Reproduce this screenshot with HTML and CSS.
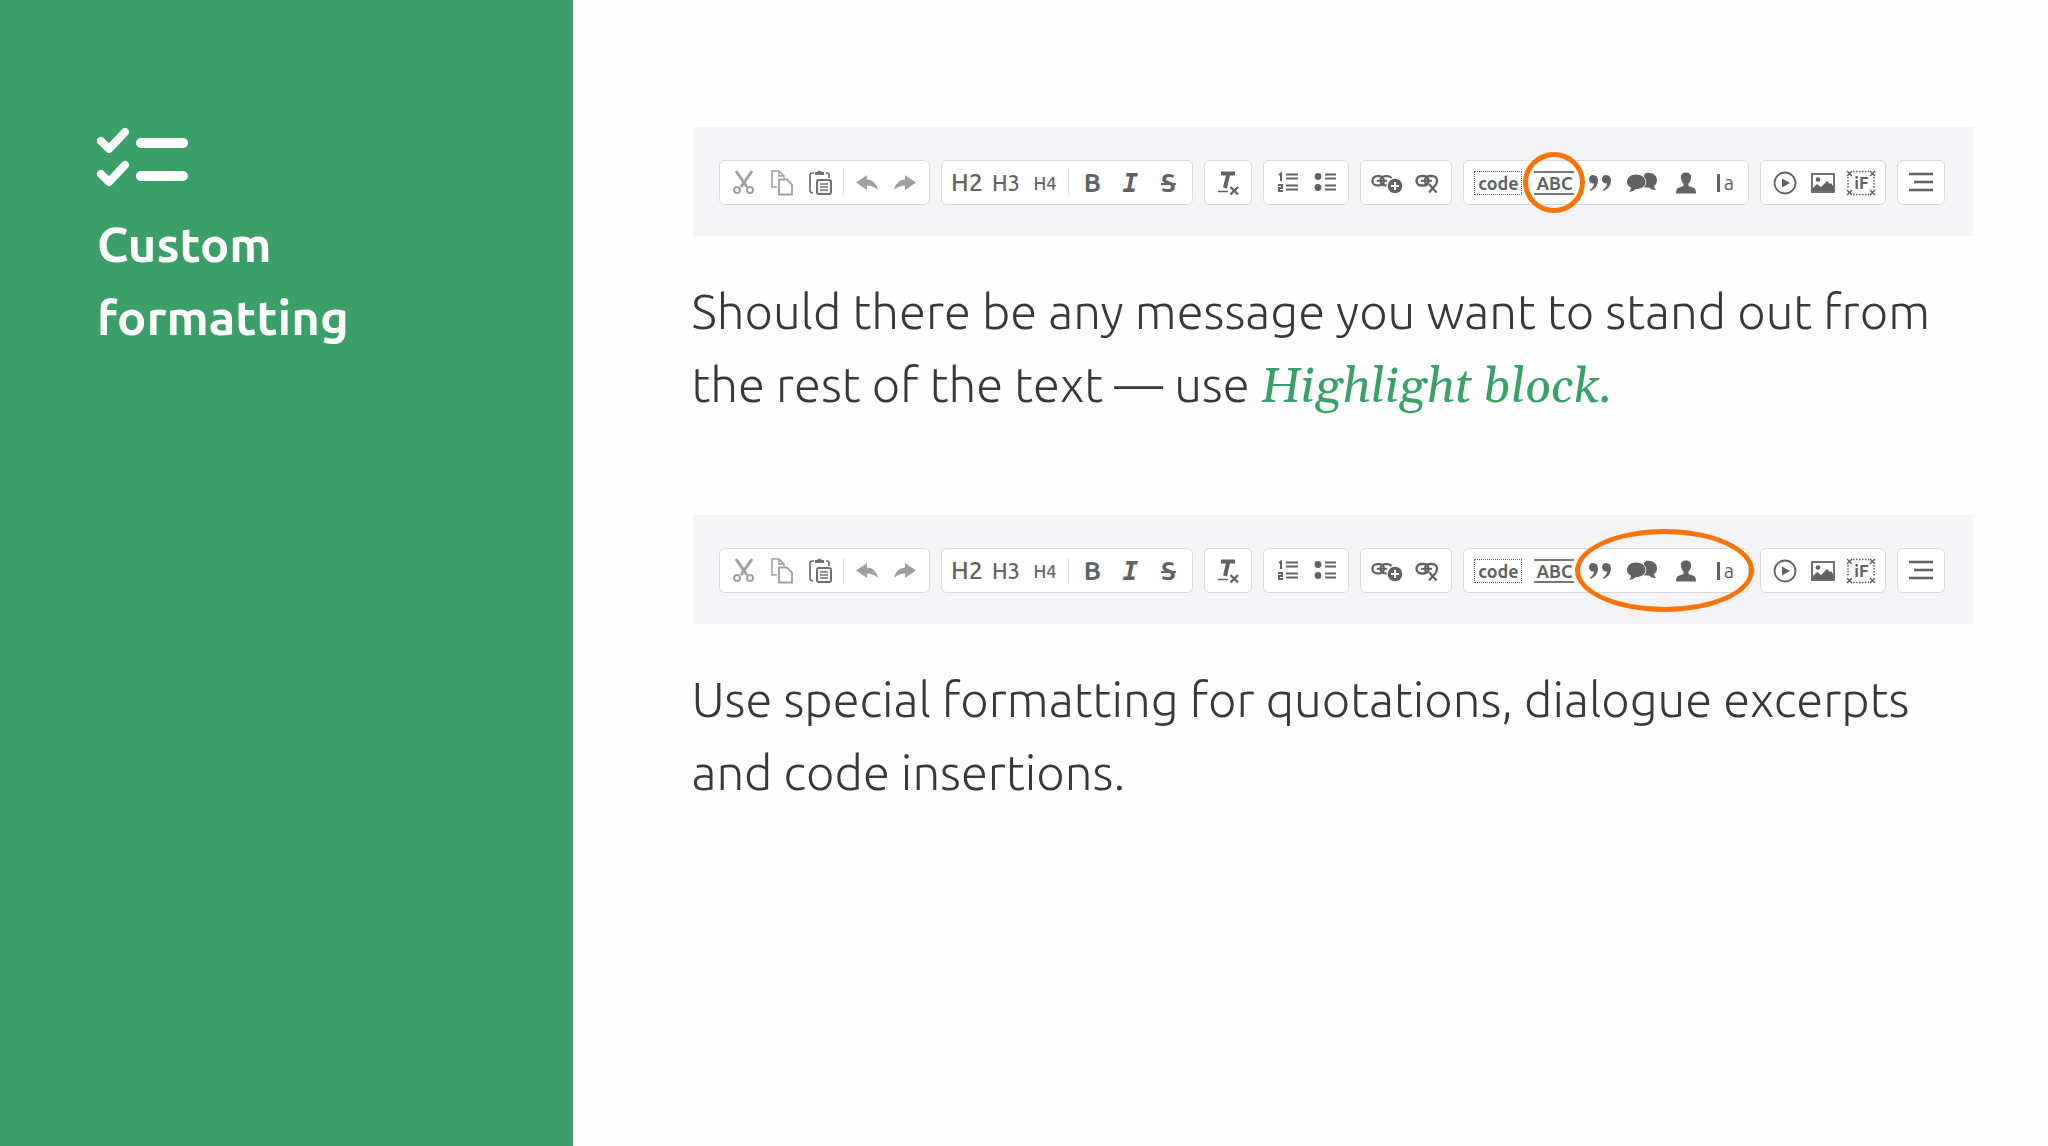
FILE: index.html
```html
<!DOCTYPE html>
<html lang="en">
<head>
    <meta charset="UTF-8">
    <meta name="viewport" content="width=device-width, initial-scale=1.0">
    <title>Custom formatting</title>
    <link rel="stylesheet" href="styles.css">
</head>
<body>
    <!-- Icons shared by both toolbars -->
    <svg class="sprite" aria-hidden="true">
        <symbol id="i-cut" viewBox="0 0 24 26">
            <path d="M4 1L15 17M20 1L9 17" fill="none" stroke="currentColor" stroke-width="3"/>
            <circle cx="5" cy="20" r="3" fill="none" stroke="currentColor" stroke-width="2"/>
            <circle cx="18" cy="20" r="3" fill="none" stroke="currentColor" stroke-width="2"/>
        </symbol>
        <symbol id="i-copy" viewBox="0 0 24 26">
            <path d="M7 17H2V1H9L14 6V8M9 1V6H14" fill="none" stroke="currentColor" stroke-width="1.5"/>
            <path d="M9 9.500H17L22 14.500V24.500H9Z" fill="none" stroke="currentColor" stroke-width="1.800"/>
        </symbol>
        <symbol id="i-paste" viewBox="0 0 24 26">
            <path d="M6 3H4Q2 3 2 5V20Q2 23 5 23M18 3H19Q21 3 21 5V8" fill="none" stroke="currentColor" stroke-width="1.700"/>
            <path d="M7 5V2H9Q11.500 -1 14 2H16V5Z" fill="currentColor"/>
            <rect x="9" y="10" width="14" height="14" rx="2" fill="none" stroke="currentColor" stroke-width="2"/>
            <path d="M12 14H20M12 17H20M12 20H20" stroke="currentColor" stroke-width="1.400"/>
        </symbol>
        <symbol id="i-undo" viewBox="0 0 24 18">
            <path d="M1 8.500L12 1V5.500Q21 6 23 16Q18 11.500 12 11.500V16Z" fill="currentColor"/>
        </symbol>
        <symbol id="i-redo" viewBox="0 0 24 18">
            <path d="M23 8.500L12 1V5.500Q3 6 1 16Q6 11.500 12 11.500V16Z" fill="currentColor"/>
        </symbol>
        <symbol id="i-clear" viewBox="0 0 24 26">
            <path d="M5 3.500H19M12.500 3L9 18" fill="none" stroke="currentColor" stroke-width="4"/>
            <path d="M2 21.500H12" stroke="currentColor" stroke-width="1.500"/>
            <path d="M14.500 17L22 24.500M22 17L14.500 24.500" stroke="currentColor" stroke-width="2.400"/>
        </symbol>
        <symbol id="i-ol" viewBox="0 0 24 24">
            <path d="M3 4L5 2.500V10M2 14H6V17H3V20H7" fill="none" stroke="currentColor" stroke-width="2"/>
            <path d="M10 3.500H22M10 7.500H22M10 14.500H22M10 18.500H22" stroke="currentColor" stroke-width="1.800"/>
        </symbol>
        <symbol id="i-ul" viewBox="0 0 24 24">
            <circle cx="5" cy="5.500" r="3.400" fill="currentColor"/>
            <circle cx="5" cy="16.500" r="3.400" fill="currentColor"/>
            <path d="M12 3.500H23M12 7.500H23M12 14.500H23M12 18.500H23" stroke="currentColor" stroke-width="1.800"/>
        </symbol>
        <symbol id="i-chain" viewBox="0 0 24 14">
            <rect x="1.500" y="2" width="12" height="9.500" rx="4.700" fill="none" stroke="currentColor" stroke-width="2.400"/>
            <rect x="10" y="2" width="12" height="9.500" rx="4.700" fill="none" stroke="currentColor" stroke-width="2.400"/>
            <path d="M6 6.800H17" stroke="currentColor" stroke-width="2"/>
        </symbol>
        <symbol id="i-link" viewBox="0 0 32 24">
            <use href="#i-chain" x="0" y="3" width="23" height="14"/>
            <circle cx="24" cy="15" r="8.500" fill="#fff"/>
            <circle cx="24" cy="15" r="7.300" fill="currentColor"/>
            <path d="M24 11V19M20 15H28" stroke="#fff" stroke-width="2"/>
        </symbol>
        <symbol id="i-unlink" viewBox="0 0 24 24">
            <use href="#i-chain" x="0" y="3" width="24" height="14"/>
            <path d="M14 13L21 21M21 13L14 21" stroke="#fff" stroke-width="5"/>
            <path d="M14 13L21.500 21.500M21.500 13L14 21.500" stroke="currentColor" stroke-width="2.200"/>
        </symbol>
        <symbol id="i-quote" viewBox="0 0 24 18">
            <path id="q" d="M5 1Q10 1 10 7Q9.500 14 2.500 17L2 15.500Q6 13 6 9.500Q1 9.500 1 5Q1.500 1 5 1Z" fill="currentColor"/>
            <use href="#q" x="13"/>
        </symbol>
        <symbol id="i-chat" viewBox="0 0 32 22">
            <path d="M20 1C26 0 31 3 31 8Q31 12 28 14Q28 16 30 18Q25 18 23 15.500H18V3Z" fill="currentColor"/>
            <path d="M10 2.500C16 2.500 19.500 6 19.500 10C19.500 14.500 15 17 10 17Q7 20 3 20Q5 18 5 15.500Q1 13.500 1 10C1 6 4.500 2.500 10 2.500Z" fill="currentColor" stroke="#fff" stroke-width="1.500" paint-order="stroke"/>
        </symbol>
        <symbol id="i-user" viewBox="0 0 20 22">
            <path d="M10 0.500C14 0.500 15.500 3 15 6.500Q14.500 10 12.500 11.500V14L18 16Q20 17 20 21.500H0Q0 17 2 16L7.500 14V11.500Q5.500 10 5 6.500C4.500 3 6 0.500 10 0.500Z" fill="currentColor"/>
        </symbol>
        <symbol id="i-play" viewBox="0 0 24 24">
            <circle cx="12" cy="12" r="10.500" fill="none" stroke="currentColor" stroke-width="1.800"/>
            <path d="M9 7.500L17 12L9 16.500Z" fill="currentColor"/>
        </symbol>
        <symbol id="i-image" viewBox="0 0 24 20">
            <rect x="1" y="1" width="22" height="18" fill="none" stroke="currentColor" stroke-width="1.800"/>
            <circle cx="7" cy="6.500" r="2.300" fill="currentColor"/>
            <path d="M2 18V15L6 11L10 14L16 8L19 11L20 10L22 13V18Z" fill="currentColor"/>
        </symbol>
        <symbol id="i-frame" viewBox="0 0 30 26">
            <path d="M7 1.500H23M7 24.500H23M2 7V19M28 7V19" fill="none" stroke="currentColor" stroke-width="1.500" stroke-dasharray="1.500 1.500"/>
            <path d="M1 1L6 6M6 1L1 6M24 1L29 6M29 1L24 6M1 20L6 25M6 20L1 25M24 20L29 25M29 20L24 25" stroke="currentColor" stroke-width="1.500"/>
        </symbol>
        <symbol id="i-align" viewBox="0 0 26 22">
            <path d="M1 2H25M6 10H25M1 18H25" stroke="currentColor" stroke-width="2.600"/>
        </symbol>
    </svg>

    <div class="slide">
        <aside class="sidebar">
            <svg class="sidebar-icon" viewBox="0 0 92 60" aria-hidden="true">
                <path d="M4 14L12 22L28 5M4 47L12 55L28 38" fill="none" stroke="currentColor" stroke-width="8" stroke-linecap="round" stroke-linejoin="round"/>
                <path d="M44 16H86M44 49H86" stroke="currentColor" stroke-width="10" stroke-linecap="round"/>
            </svg>
            <h1>Custom formatting</h1>
        </aside>

        <main class="content">
            <section>
                <div class="toolbar" role="toolbar" aria-label="Highlight block">
                    <div class="group light">
                        <button aria-label="Cut"><svg width="24" height="26"><use href="#i-cut"/></svg></button>
                        <button aria-label="Copy"><svg width="24" height="26"><use href="#i-copy"/></svg></button>
                        <button class="dark" aria-label="Paste"><svg width="24" height="26"><use href="#i-paste"/></svg></button>
                        <span class="divider"></span>
                        <button aria-label="Undo"><svg width="24" height="18"><use href="#i-undo"/></svg></button>
                        <button aria-label="Redo"><svg width="24" height="18"><use href="#i-redo"/></svg></button>
                    </div>
                    <div class="group">
                        <button class="h2">H2</button>
                        <button class="h3">H3</button>
                        <button class="h4">H4</button>
                        <span class="divider"></span>
                        <button class="bold">B</button>
                        <button class="italic">I</button>
                        <button class="strike">S</button>
                    </div>
                    <div class="group">
                        <button class="single" aria-label="Clear formatting"><svg width="24" height="26"><use href="#i-clear"/></svg></button>
                    </div>
                    <div class="group lists">
                        <button aria-label="Numbered list"><svg width="24" height="24"><use href="#i-ol"/></svg></button>
                        <button aria-label="Bulleted list"><svg width="24" height="24"><use href="#i-ul"/></svg></button>
                    </div>
                    <div class="group">
                        <button class="link" aria-label="Add link"><svg width="32" height="24"><use href="#i-link"/></svg></button>
                        <button aria-label="Remove link"><svg width="24" height="24"><use href="#i-unlink"/></svg></button>
                    </div>
                    <div class="group">
                        <button class="code"><span>code</span></button>
                        <span class="mark circle"><button class="abc"><span>ABC</span></button></span>
                        <button aria-label="Quote"><svg width="24" height="18"><use href="#i-quote"/></svg></button>
                        <button class="chat" aria-label="Dialogue"><svg width="32" height="22"><use href="#i-chat"/></svg></button>
                        <button class="user" aria-label="Person"><svg width="20" height="22"><use href="#i-user"/></svg></button>
                        <button class="letter"><span>a</span></button>
                    </div>
                    <div class="group">
                        <button aria-label="Video"><svg width="24" height="24"><use href="#i-play"/></svg></button>
                        <button aria-label="Image"><svg width="24" height="20"><use href="#i-image"/></svg></button>
                        <button class="frame"><svg width="30" height="26"><use href="#i-frame"/></svg><span>iF</span></button>
                    </div>
                    <div class="group">
                        <button class="single" aria-label="Align"><svg width="26" height="22"><use href="#i-align"/></svg></button>
                    </div>
                </div>
                <p>Should there be any message you want to stand out from the rest of the text — use <em>Highlight block.</em></p>
            </section>

            <section>
                <div class="toolbar" role="toolbar" aria-label="Special formatting">
                    <div class="group light">
                        <button aria-label="Cut"><svg width="24" height="26"><use href="#i-cut"/></svg></button>
                        <button aria-label="Copy"><svg width="24" height="26"><use href="#i-copy"/></svg></button>
                        <button class="dark" aria-label="Paste"><svg width="24" height="26"><use href="#i-paste"/></svg></button>
                        <span class="divider"></span>
                        <button aria-label="Undo"><svg width="24" height="18"><use href="#i-undo"/></svg></button>
                        <button aria-label="Redo"><svg width="24" height="18"><use href="#i-redo"/></svg></button>
                    </div>
                    <div class="group">
                        <button class="h2">H2</button>
                        <button class="h3">H3</button>
                        <button class="h4">H4</button>
                        <span class="divider"></span>
                        <button class="bold">B</button>
                        <button class="italic">I</button>
                        <button class="strike">S</button>
                    </div>
                    <div class="group">
                        <button class="single" aria-label="Clear formatting"><svg width="24" height="26"><use href="#i-clear"/></svg></button>
                    </div>
                    <div class="group lists">
                        <button aria-label="Numbered list"><svg width="24" height="24"><use href="#i-ol"/></svg></button>
                        <button aria-label="Bulleted list"><svg width="24" height="24"><use href="#i-ul"/></svg></button>
                    </div>
                    <div class="group">
                        <button class="link" aria-label="Add link"><svg width="32" height="24"><use href="#i-link"/></svg></button>
                        <button aria-label="Remove link"><svg width="24" height="24"><use href="#i-unlink"/></svg></button>
                    </div>
                    <div class="group">
                        <button class="code"><span>code</span></button>
                        <button class="abc"><span>ABC</span></button>
                        <span class="mark ellipse">
                            <button aria-label="Quote"><svg width="24" height="18"><use href="#i-quote"/></svg></button>
                            <button class="chat" aria-label="Dialogue"><svg width="32" height="22"><use href="#i-chat"/></svg></button>
                            <button class="user" aria-label="Person"><svg width="20" height="22"><use href="#i-user"/></svg></button>
                            <button class="letter"><span>a</span></button>
                        </span>
                    </div>
                    <div class="group">
                        <button aria-label="Video"><svg width="24" height="24"><use href="#i-play"/></svg></button>
                        <button aria-label="Image"><svg width="24" height="20"><use href="#i-image"/></svg></button>
                        <button class="frame"><svg width="30" height="26"><use href="#i-frame"/></svg><span>iF</span></button>
                    </div>
                    <div class="group">
                        <button class="single" aria-label="Align"><svg width="26" height="22"><use href="#i-align"/></svg></button>
                    </div>
                </div>
                <p>Use special formatting for quotations, dialogue excerpts and code insertions.</p>
            </section>
        </main>
    </div>
</body>
</html>
```
FILE: styles.css
```css
* {
    box-sizing: border-box;
}
body {
    margin: 0;
    background: #fefefe;
    color: #38383c;
    font-family: Ubuntu, "Noto Sans", "Open Sans", sans-serif;
}
.sprite {
    display: none;
}
.slide {
    display: flex;
    min-height: 100vh;
}
.sidebar {
    flex: 0 0 28%;
    padding: 127px 97px;
    background: #3b9f6a;
    color: #fff;
}
.sidebar-icon {
    display: block;
    width: 92px;
    height: 60px;
}
h1 {
    margin: 20px 0 0;
    font-size: 49px;
    line-height: 73px;
    font-weight: 700;
}
.content {
    flex: 1;
    min-width: 0;
    padding: 127px 75px 60px 120px;
}
section {
    margin-bottom: 95px;
}
p {
    margin: 38px -2px 0;
    font-size: 49px;
    line-height: 73px;
    font-weight: 300;
}
em {
    font-family: Gelasio, "Noto Serif", "Liberation Serif", serif;
    font-size: 49px;
    line-height: 1;
    font-weight: 400;
    color: #3b9f6a;
}

/* Toolbar */
.toolbar {
    display: flex;
    gap: 11px;
    padding: 33px 26px 31px;
    background: #f4f4f7;
}
.group {
    display: flex;
    align-items: center;
    height: 45px;
    padding: 0 5px;
    background: #fff;
    border: 1px solid #d8d9dc;
    border-radius: 6px;
    color: #626265;
}
.group button {
    display: flex;
    align-items: center;
    justify-content: center;
    flex: none;
    width: 38px;
    height: 43px;
    padding: 0;
    border: none;
    background: none;
    color: inherit;
    font: inherit;
    line-height: 1;
    cursor: pointer;
}
.light {
    color: #a0a0a2;
}
.group .dark {
    color: #707073;
}
.divider {
    width: 1px;
    height: 26px;
    margin: 0 4px;
    background: #dcdde0;
}
.group .h2,
.group .h3,
.group .h4 {
    width: 39px;
    font-weight: 500;
}
.group .h2 {
    font-size: 25px;
}
.group .h3 {
    font-size: 22px;
}
.group .h4 {
    font-size: 18px;
}
.group .bold,
.group .strike {
    font-size: 26px;
    font-weight: 700;
}
.group .italic {
    font-family: "DejaVu Sans Mono", monospace;
    font-size: 26px;
    font-weight: 700;
    font-style: italic;
}
.group .strike {
    text-decoration: line-through 2px;
}
.group .single {
    width: 36px;
}
.group.lists button {
    width: 37px;
}
.group .link {
    width: 42px;
}
.group .code {
    width: 58px;
}
.code span {
    width: 48px;
    border: 1px dotted #626265;
    font-size: 18px;
    line-height: 22px;
    font-weight: 700;
}
.group .abc {
    width: 54px;
}
.abc span {
    width: 40px;
    border: solid #77777a;
    border-width: 2px 0;
    font-size: 18px;
    line-height: 20px;
    font-weight: 700;
}
.group .chat {
    width: 46px;
}
.group .user {
    width: 42px;
}
.group .letter {
    width: 36px;
}
.letter span {
    padding-left: 4px;
    border-left: 3px solid #626265;
    font-size: 20px;
    line-height: 18px;
}
.frame {
    position: relative;
}
.frame span {
    position: absolute;
    font-size: 17px;
    font-weight: 700;
}

/* Orange outlines drawn over the buttons */
.mark {
    display: flex;
    position: relative;
}
.mark::after {
    content: "";
    position: absolute;
    border: 5px solid #ff7300;
    border-radius: 50%;
    pointer-events: none;
}
.circle::after {
    inset: -9px -4px;
}
.ellipse::after {
    inset: -20px -11px -20px -6px;
}
```
